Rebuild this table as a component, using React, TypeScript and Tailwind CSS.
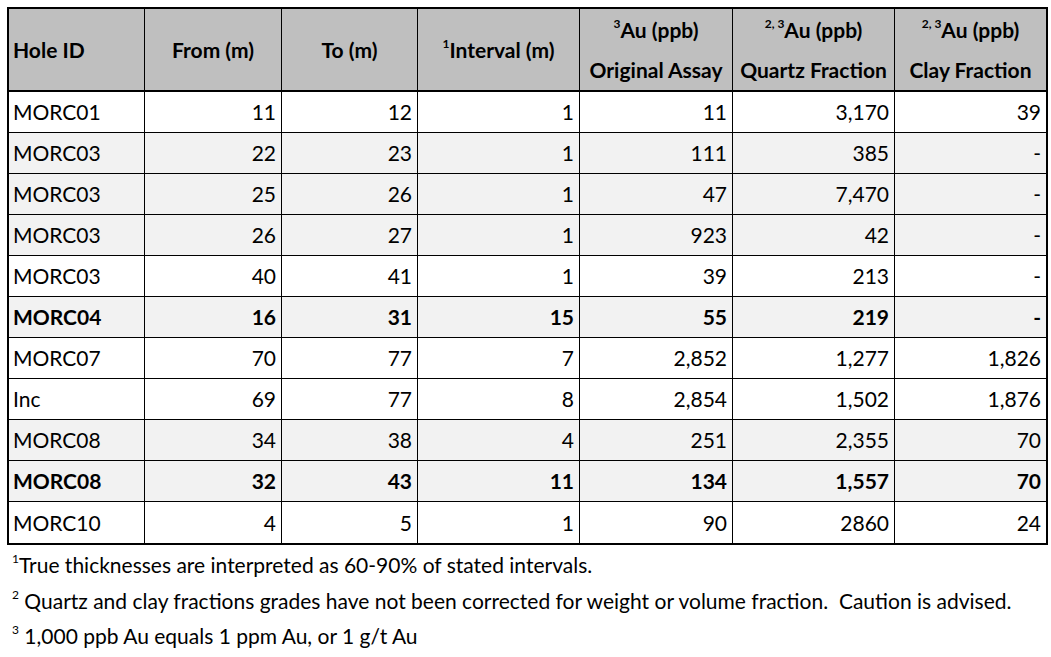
const cols = [
  'w-[136px]',
  'w-[137px]',
  'w-[136px]',
  'w-[162px]',
  'w-[153px]',
  'w-[162px]',
  'w-[151px]',
];

type Row = { cells: string[]; shade: boolean; bold?: boolean };

const rows: Row[] = [
  { cells: ['MORC01', '11', '12', '1', '11', '3,170', '39'], shade: false },
  { cells: ['MORC03', '22', '23', '1', '111', '385', '-'], shade: true },
  { cells: ['MORC03', '25', '26', '1', '47', '7,470', '-'], shade: true },
  { cells: ['MORC03', '26', '27', '1', '923', '42', '-'], shade: true },
  { cells: ['MORC03', '40', '41', '1', '39', '213', '-'], shade: false },
  { cells: ['MORC04', '16', '31', '15', '55', '219', '-'], shade: true, bold: true },
  { cells: ['MORC07', '70', '77', '7', '2,852', '1,277', '1,826'], shade: false },
  { cells: ['Inc', '69', '77', '8', '2,854', '1,502', '1,876'], shade: false },
  { cells: ['MORC08', '34', '38', '4', '251', '2,355', '70'], shade: true },
  { cells: ['MORC08', '32', '43', '11', '134', '1,557', '70'], shade: true, bold: true },
  { cells: ['MORC10', '4', '5', '1', '90', '2860', '24'], shade: false },
];

function Sup({ children }: { children: React.ReactNode }) {
  return <sup className="relative -top-[2px] align-super text-[12px] leading-none">{children}</sup>;
}

function HeaderCell({ i, children }: { i: number; children: React.ReactNode }) {
  const last = i === cols.length - 1;
  return (
    <div
      className={`${cols[i]} h-[83px] shrink-0 border-b-2 border-black bg-[#bfbfbf] font-bold ${
        last ? '' : 'border-r'
      }`}
    >
      {children}
    </div>
  );
}

export default function App() {
  return (
    <div className="min-h-[657px] bg-white text-black" style={{ fontFamily: 'Lato, "Open Sans", sans-serif' }}>
      <div className="pl-[7px] pt-[7px]">
        <div className="w-[1041px] border-2 border-black text-[21px]">
          <div className="flex">
            <HeaderCell i={0}>
              <div className="flex h-full items-center pl-[4px]">Hole ID</div>
            </HeaderCell>
            <HeaderCell i={1}>
              <div className="flex h-full items-center justify-center">From (m)</div>
            </HeaderCell>
            <HeaderCell i={2}>
              <div className="flex h-full items-center justify-center">To (m)</div>
            </HeaderCell>
            <HeaderCell i={3}>
              <div className="flex h-full items-center justify-center">
                <span>
                  <Sup>1</Sup>Interval (m)
                </span>
              </div>
            </HeaderCell>
            <HeaderCell i={4}>
              <div className="flex h-[41px] items-center justify-center">
                <span>
                  <Sup>3</Sup>Au (ppb)
                </span>
              </div>
              <div className="flex h-[40px] items-center justify-center">Original Assay</div>
            </HeaderCell>
            <HeaderCell i={5}>
              <div className="flex h-[41px] items-center justify-center">
                <span>
                  <Sup>2, 3</Sup>Au (ppb)
                </span>
              </div>
              <div className="flex h-[40px] items-center justify-center">Quartz Fraction</div>
            </HeaderCell>
            <HeaderCell i={6}>
              <div className="flex h-[41px] items-center justify-center">
                <span>
                  <Sup>2, 3</Sup>Au (ppb)
                </span>
              </div>
              <div className="flex h-[40px] items-center justify-center">Clay Fraction</div>
            </HeaderCell>
          </div>
          {rows.map((row, r) => (
            <div
              key={r}
              className={`flex ${row.shade ? 'bg-[#f2f2f2]' : 'bg-white'} ${row.bold ? 'font-bold' : ''}`}
            >
              {row.cells.map((c, i) => (
                <div
                  key={i}
                  className={`${cols[i]} flex h-[41px] shrink-0 items-center border-black ${
                    i === 0 ? 'justify-start pl-[4px]' : 'justify-end pr-[5px]'
                  } ${i === cols.length - 1 ? '' : 'border-r'} ${r === rows.length - 1 ? '' : 'border-b'}`}
                >
                  {c}
                </div>
              ))}
            </div>
          ))}
        </div>
      </div>
      <div className="pl-[12px] pt-[2px] text-[21px] leading-[35.5px]">
        <p>
          <Sup>1</Sup>True thicknesses are interpreted as 60-90% of stated intervals.
        </p>
        <p>
          <Sup>2</Sup> Quartz and clay fractions grades have not been corrected for weight or volume fraction.&nbsp; Caution is advised.
        </p>
        <p>
          <Sup>3</Sup> 1,000 ppb Au equals 1 ppm Au, or 1 g/t Au
        </p>
      </div>
    </div>
  );
}
